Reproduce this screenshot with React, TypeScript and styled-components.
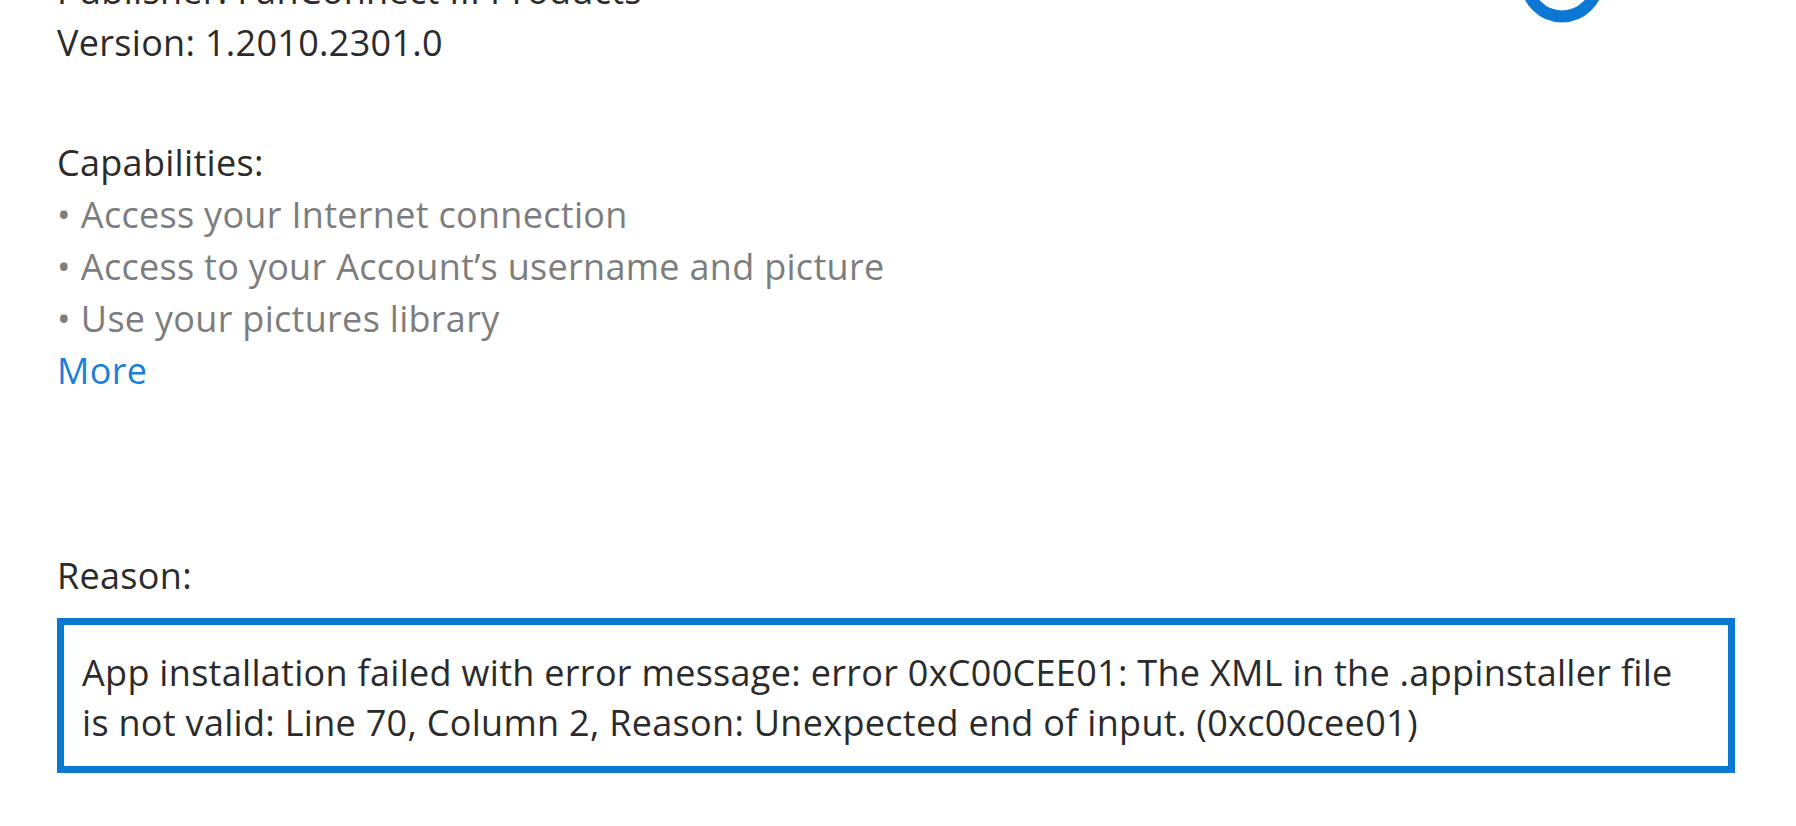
import * as React from 'react';
import styled, { createGlobalStyle } from 'styled-components';

const GlobalStyle = createGlobalStyle`
  html, body {
    margin: 0;
    padding: 0;
    background: #ffffff;
    overflow: hidden;
  }
  body {
    font-family: 'Open Sans', 'Noto Sans', sans-serif;
    color: #2b2b2b;
  }
`;

const Page = styled.div`
  margin-top: -61px;
  padding: 0 61px 0 57px;
  box-sizing: border-box;
  width: 1796px;
`;

const Header = styled.div`
  display: flex;
  justify-content: space-between;
  align-items: flex-start;
`;

const Info = styled.div`
  padding-top: 26px;
`;

const Logo = styled.div`
  width: 84px;
  height: 84px;
  margin-right: 131px;
`;

const Line = styled.div<{ $muted?: boolean; $link?: boolean }>`
  font-size: 36px;
  letter-spacing: 0.3px;
  line-height: 52px;
  white-space: nowrap;
  color: ${(p) => (p.$link ? '#1a7fd8' : p.$muted ? '#7d7d7d' : '#2b2b2b')};
`;

const Section = styled.div<{ $gap: number }>`
  margin-top: ${(p) => p.$gap}px;
`;

const Bullet = styled(Line)`
  &::before {
    content: '•';
    margin-right: 10px;
  }
`;

const ReasonBox = styled.div`
  margin-top: 16px;
  border: 7px solid #0b78d4;
  padding: 23px 18px 18px 18px;
  font-size: 36px;
  letter-spacing: 0.3px;
  line-height: 50px;
  white-space: nowrap;
  color: #2b2b2b;
`;

const capabilities = [
  'Access your Internet connection',
  'Access to your Account’s username and picture',
  'Use your pictures library',
];

export default function App() {
  return (
    <>
      <GlobalStyle />
      <Page>
        <Header>
          <Info>
            <Line>Publisher: FanConnect III Products</Line>
            <Line>Version: 1.2010.2301.0</Line>
          </Info>
          <Logo>
            <svg width="84" height="84" viewBox="0 0 84 84">
              <circle cx="42" cy="42" r="35.5" fill="none" stroke="#0b78d4" strokeWidth="12" />
            </svg>
          </Logo>
        </Header>

        <Section $gap={68}>
          <Line>Capabilities:</Line>
          {capabilities.map((c) => (
            <Bullet $muted key={c}>
              {c}
            </Bullet>
          ))}
          <Line $link>More</Line>
        </Section>

        <Section $gap={153}>
          <Line>Reason:</Line>
          <ReasonBox>
            App installation failed with error message: error 0xC00CEE01: The XML in the .appinstaller file
            <br />
            is not valid: Line 70, Column 2, Reason: Unexpected end of input. (0xc00cee01)
          </ReasonBox>
        </Section>
      </Page>
    </>
  );
}
